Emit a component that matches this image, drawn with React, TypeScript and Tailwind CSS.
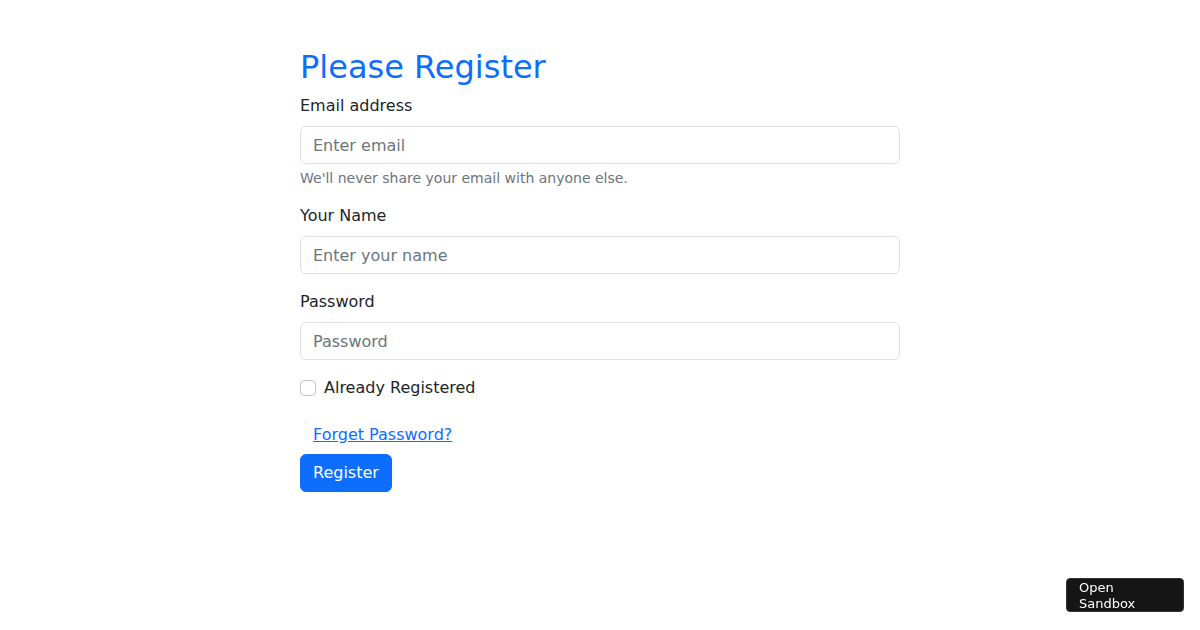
export default function App() {
  return (
    <div
      className="min-h-[630px] bg-white text-[#212529] text-base leading-6"
      style={{ fontFamily: '"DejaVu Sans", sans-serif' }}
    >
      <div className="mx-auto w-[600px] pt-[48px]">
        <h1 className="mb-2 text-[32px] leading-[38px] font-normal text-[#0d6efd]">
          Please Register
        </h1>
        <form>
          <div className="mb-4">
            <label className="mb-2 block">Email address</label>
            <input
              type="email"
              placeholder="Enter email"
              className="block h-[38px] w-full rounded-[6px] border border-[#dee2e6] px-3 py-[6px] placeholder:text-[#6c757d] outline-none"
            />
            <div className="mt-1 text-sm leading-5 text-[#6c757d]">
              We'll never share your email with anyone else.
            </div>
          </div>
          <div className="mb-4">
            <label className="mb-2 block">Your Name</label>
            <input
              type="text"
              placeholder="Enter your name"
              className="block h-[38px] w-full rounded-[6px] border border-[#dee2e6] px-3 py-[6px] placeholder:text-[#6c757d] outline-none"
            />
          </div>
          <div className="mb-4">
            <label className="mb-2 block">Password</label>
            <input
              type="password"
              placeholder="Password"
              className="block h-[38px] w-full rounded-[6px] border border-[#dee2e6] px-3 py-[6px] placeholder:text-[#6c757d] outline-none"
            />
          </div>
          <div className="mb-4 flex items-center gap-2 h-6">
            <span className="block h-4 w-4 rounded-[4px] border border-[#c4c8cc] bg-white" />
            <label>Already Registered</label>
          </div>
          <button
            type="button"
            className="block h-[38px] border border-transparent px-3 text-[#0d6efd] underline"
          >
            Forget Password?
          </button>
          <button
            type="button"
            className="block h-[38px] rounded-[6px] border border-[#0d6efd] bg-[#0d6efd] px-3 text-white"
          >
            Register
          </button>
        </form>
      </div>
      <div className="fixed bottom-[18px] right-4 w-[118px] h-[34px] rounded-[4px] border border-[#333] bg-[#151515] pl-3 pt-[1px] text-[13px] leading-4 text-white">
        <span className="block">Open</span>
        <span className="block">Sandbox</span>
      </div>
    </div>
  );
}
